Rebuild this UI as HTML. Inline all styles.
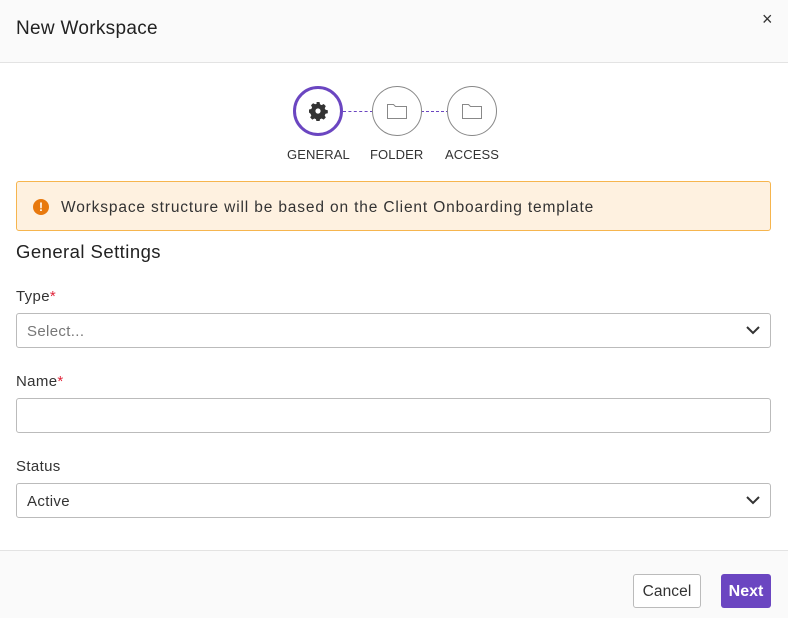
<!DOCTYPE html>
<html><head><style>
*{box-sizing:border-box;margin:0;padding:0}
body{width:788px;height:618px;background:#fff;font-family:"Liberation Sans",sans-serif;color:#333;position:relative;overflow:hidden}
.a{position:absolute}
.hdr{left:0;top:0;width:788px;height:63px;background:#fafafa;border-bottom:1px solid #e3e3e3}
.ftr{left:0;top:550px;width:788px;height:68px;background:#fafafa;border-top:1px solid #e3e3e3}
.circ{width:50px;height:50px;border-radius:50%;border:1px solid #888;background:#fff;display:flex;align-items:center;justify-content:center}
.lbl{font-size:13px;color:#333;font-weight:500;letter-spacing:0.1px}
.inp{left:16px;width:755px;height:35px;border:1px solid #bbb;border-radius:3px;background:#fff;font-size:15px;padding:9px 10px;letter-spacing:0.35px}
.fl{left:16px;font-size:15px;color:#333;letter-spacing:0.35px}
.chev{position:absolute;right:10px;top:11px}
</style></head><body>
<div class="a hdr"></div>
<div class="a" style="left:16px;top:18px;font-size:19px;color:#222;letter-spacing:0.3px">New Workspace</div>
<div class="a" style="left:762px;top:9px;font-size:18px;color:#333">×</div>

<div class="a" style="left:343px;top:111px;width:30px;border-top:1px dashed #6b46c1"></div>
<div class="a" style="left:421px;top:111px;width:28px;border-top:1px dashed #6b46c1"></div>
<div class="a circ" style="left:293px;top:86px;border:3px solid #6b46c1">
<svg width="20" height="20" viewBox="0 0 20 20"><path fill="#333" d="M8.5 1h3l.5 2.3 1.6.8 2.1-1.1 2.1 2.1-1.1 2.1.8 1.6 2.3.5v3l-2.3.5-.8 1.6 1.1 2.1-2.1 2.1-2.1-1.1-1.6.8-.5 2.3h-3l-.5-2.3-1.6-.8-2.1 1.1-2.1-2.1 1.1-2.1-.8-1.6L1 11.5v-3l2.3-.5.8-1.6-1.1-2.1 2.1-2.1 2.1 1.1 1.6-.8z"/><circle cx="10" cy="10" r="2.6" fill="#fff"/></svg></div>
<div class="a circ" style="left:372px;top:86px"><svg width="22" height="18" viewBox="0 0 22 18"><path d="M1.5 2.5h6l2 2h11v12h-19z" fill="none" stroke="#888" stroke-width="1"/></svg></div>
<div class="a circ" style="left:447px;top:86px"><svg width="22" height="18" viewBox="0 0 22 18"><path d="M1.5 2.5h6l2 2h11v12h-19z" fill="none" stroke="#888" stroke-width="1"/></svg></div>
<div class="a lbl" style="left:287px;top:147px">GENERAL</div>
<div class="a lbl" style="left:370px;top:147px">FOLDER</div>
<div class="a lbl" style="left:445px;top:147px">ACCESS</div>

<div class="a" style="left:16px;top:181px;width:755px;height:50px;background:#fef1e0;border:1px solid #f6b54e;border-radius:3px"></div>
<div class="a" style="left:33px;top:199px;width:16px;height:16px;border-radius:50%;background:#e8790e;color:#fff;font-size:12px;font-weight:bold;text-align:center;line-height:16px">!</div>
<div class="a" style="left:61px;top:199px;font-size:15.5px;color:#333;letter-spacing:0.85px">Workspace structure will be based on the Client Onboarding template</div>

<div class="a" style="left:16px;top:241px;font-size:18.5px;color:#222;letter-spacing:0.45px">General Settings</div>

<div class="a fl" style="top:288px">Type<span style="color:#e0243a">*</span></div>
<div class="a inp" style="top:313px;color:#777">Select...<svg class="chev" width="14" height="10" viewBox="0 0 14 10"><path d="M1 2l6 6 6-6" fill="none" stroke="#333" stroke-width="2"/></svg></div>

<div class="a fl" style="top:373px">Name<span style="color:#e0243a">*</span></div>
<div class="a inp" style="top:398px"></div>

<div class="a fl" style="top:458px">Status</div>
<div class="a inp" style="top:483px;color:#333">Active<svg class="chev" width="14" height="10" viewBox="0 0 14 10"><path d="M1 2l6 6 6-6" fill="none" stroke="#333" stroke-width="2"/></svg></div>

<div class="a ftr"></div>
<div class="a" style="left:633px;top:574px;width:68px;height:34px;border:1px solid #bbb;border-radius:3px;background:#fff;font-size:15.5px;color:#333;text-align:center;line-height:33px;letter-spacing:0.1px">Cancel</div>
<div class="a" style="left:721px;top:574px;width:50px;height:34px;border-radius:3px;background:#6b46c1;font-size:16px;font-weight:bold;color:#fff;text-align:center;line-height:35px">Next</div>
</body></html>
